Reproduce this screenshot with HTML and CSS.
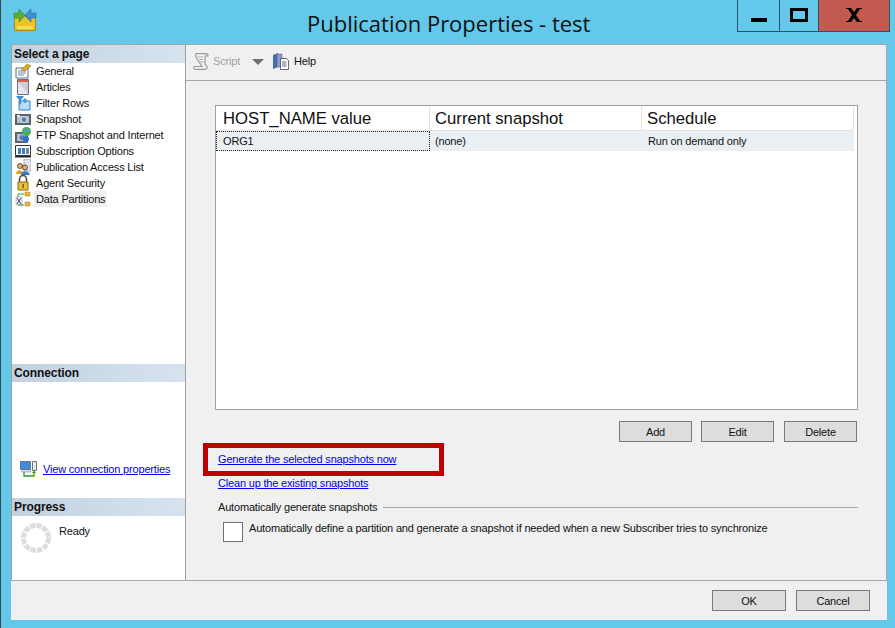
FILE: index.html
```html
<!DOCTYPE html>
<html lang="en">
<head>
<meta charset="utf-8">
<title>Publication Properties - test</title>
<link rel="stylesheet" href="styles.css">
</head>
<body>
<div class="frame">
  <header class="titlebar">
    <svg class="app-icon" width="24" height="24" viewBox="0 0 24 24">
      <path d="M1.500 7.500h21v15h-21z" fill="#e8c42a" stroke="#a98a14"/>
      <path d="M4 18h16v3H4z" fill="#f5dc55"/>
      <path d="M1 5h5V1l6 6.500-6 6.500V10H1z" fill="#5cae3c" stroke="#3c7f2c" stroke-width=".6"/>
      <path d="M23 5h-5V1l-6.500 6.500L18 14V10h5z" fill="#3f8fd0" stroke="#2d6a9f" stroke-width=".6"/>
    </svg>
    <h1 class="title">Publication Properties - test</h1>
    <div class="winctl">
      <div class="winbtn min"><span class="min-bar"></span></div>
      <div class="winbtn max"><span class="max-box"></span></div>
      <div class="winbtn close">
        <svg width="16" height="14" viewBox="0 0 16 14"><path d="M0 0h5l3 4 3-4h5v1h-2L10 7l4 6h2v1h-5L8 10l-3 4H0v-1h2l4-6-4-6H0z" fill="#000"/></svg>
      </div>
    </div>
  </header>

  <div class="client">
    <div class="panes">
      <aside class="sidebar">
        <section class="sec-pages">
          <h2 class="sec-head">Select a page</h2>
          <ul class="pages">
            <li class="page">
              <svg class="ico" width="16" height="16" viewBox="0 0 16 16"><path d="M1 5h12v10H1z" fill="#fff" stroke="#5a6a8a"/><path d="M3 8h8M3 10h8M3 12h6" stroke="#6a86b0"/><path d="M6 7l6-6 4 2-6 5z" fill="#e0a92c" stroke="#8d6a14" stroke-width=".5"/></svg>
              <span>General</span></li>
            <li class="page">
              <svg class="ico" width="16" height="16" viewBox="0 0 16 16"><path d="M2.500 0.500h11v15h-11z" fill="#d0ccd6" stroke="#6f6f86"/><path d="M3 1h10v2H3z" fill="#d9604a"/><path d="M3 3l10 12H3z" fill="#e8e6ec"/></svg>
              <span>Articles</span></li>
            <li class="page">
              <svg class="ico" width="16" height="16" viewBox="0 0 16 16"><path d="M4 6h11v9H4z" fill="#bcdcf5" stroke="#2f7fc0"/><path d="M1 1h8L6 5v5L4 8V5z" fill="#3b8fd3"/><path d="M10 3l3 3h-2v2h-2V6H7z" fill="#4da0dc"/></svg>
              <span>Filter Rows</span></li>
            <li class="page">
              <svg class="ico" width="16" height="16" viewBox="0 0 16 16"><path d="M0 3h16v11H0z" fill="#5a6470"/><path d="M2 5h12v7H2z" fill="#b4c0cd"/><circle cx="9" cy="8.500" r="3" fill="#5b7ea6" stroke="#e6ecf2"/><path d="M2 4h3v2H2z" fill="#e6e6e6"/></svg>
              <span>Snapshot</span></li>
            <li class="page">
              <svg class="ico" width="16" height="16" viewBox="0 0 16 16"><path d="M0 5h13v11H0z" fill="#5a6470"/><path d="M2 7h9v7H2z" fill="#b4c0cd"/><circle cx="7" cy="10.500" r="2.500" fill="#5b7ea6"/><circle cx="11.500" cy="4.500" r="4.500" fill="#4cae4c"/><path d="M9 2h5v3H9z" fill="#4f9fe0"/><circle cx="11" cy="12" r="3" fill="#2f6fd0"/></svg>
              <span>FTP Snapshot and Internet</span></li>
            <li class="page">
              <svg class="ico" width="16" height="16" viewBox="0 0 16 16"><path d="M.5 2.500h15v10H.5z" fill="#fff" stroke="#334"/><path d="M3 5h3v6H3zM7 5h3v6H7z" fill="#3d7cc8"/><path d="M11 5h3v6h-3z" fill="#788"/><path d="M0 13h16v1.500H0z" fill="#223"/></svg>
              <span>Subscription Options</span></li>
            <li class="page">
              <svg class="ico" width="16" height="16" viewBox="0 0 16 16"><path d="M9 0h7v12H9z" fill="#dfe6f0" stroke="#7788a0" stroke-width=".6"/><circle cx="5" cy="7" r="2.500" fill="#e3ad7c" stroke="#5a2e10" stroke-width=".8"/><path d="M1 15c0-5 7-5 8 0z" fill="#e5a51f"/><circle cx="10" cy="8.500" r="2.500" fill="#e3ad7c" stroke="#4a2a10" stroke-width=".8"/><path d="M6 16c0-5 8-5 9 0z" fill="#3b78c4"/></svg>
              <span>Publication Access List</span></li>
            <li class="page">
              <svg class="ico" width="16" height="16" viewBox="0 0 16 16"><path d="M4.500 7V4a3.500 3.500 0 017 0v3" fill="none" stroke="#4a4a4a" stroke-width="1.500"/><path d="M3 7h10v8H3z" fill="#e9bf3a" stroke="#8c6e12"/><path d="M7.500 9h1.500v4H7.500z" fill="#7a5c10"/></svg>
              <span>Agent Security</span></li>
            <li class="page selected">
              <svg class="ico" width="16" height="16" viewBox="0 0 16 16"><path d="M1 6h6v8H1z" fill="#eef" stroke="#889" stroke-width=".5"/><path d="M2 7l4 6M6 7l-4 6" stroke="#445"/><path d="M3 6V3h6M3 14h6" fill="none" stroke="#3c9c3c"/><path d="M10 1h5v4h-5zM10 11h5v4h-5z" fill="#e6b83a" stroke="#a38318" stroke-width=".5"/></svg>
              <span class="page-sel">Data Partitions</span></li>
          </ul>
        </section>

        <section class="sec-conn">
          <h2 class="sec-head">Connection</h2>
          <div class="conn-body">
            <svg class="ico-conn" width="18" height="16" viewBox="0 0 18 16"><path d="M.5 .5h10v8h-10z" fill="#3d8de0" stroke="#66748a"/><path d="M1 9.500h10v2H1z" fill="#b6bcc6"/><path d="M12.500 .5h4v9h-4z" fill="#e4e8ee" stroke="#6a7482"/><path d="M4 11v4h10v-3" fill="none" stroke="#2d9a2d" stroke-width="1.300"/><path d="M12 12l2-2.500 2 2.500z" fill="#2d9a2d"/></svg>
            <a class="link" href="#">View connection properties</a>
          </div>
        </section>

        <section class="sec-prog">
          <h2 class="sec-head">Progress</h2>
          <div class="prog-body">
            <svg class="spinner" width="30" height="30" viewBox="0 0 30 30"><circle cx="15" cy="15" r="12.500" fill="none" stroke="#dcdcdc" stroke-width="5" stroke-dasharray="5.345 1.200"/></svg>
            <span class="ready">Ready</span>
          </div>
        </section>
      </aside>

      <main class="main">
        <div class="toolbar">
          <svg class="tb-script" width="16" height="17" viewBox="0 0 16 17"><path d="M3 .7h9.500c1.500 0 2.500 1 2.500 2.300h-3v8l2 2.500c.3 1.500-.5 2.800-2 2.800H2.500C1 16.300.5 15 1 13.500h8L4 6 3 3.500C2.700 2 2 1 3 .7z" fill="#f2f2f2" stroke="#9a9a9a" stroke-width="1.200"/><path d="M5 4h5M6 6.500h4M7 9h3.500" stroke="#a8a8a8"/></svg>
          <span class="tb-label disabled">Script</span>
          <span class="tb-arrow"></span>
          <svg class="tb-help" width="16" height="17" viewBox="0 0 16 17"><path d="M0 2l5-2v14l-5 2z" fill="#4a6db0"/><path d="M4 1h5v13H4z" fill="#8aa0cc" stroke="#44598a" stroke-width=".5"/><path d="M7.500 5.500h6l2 2v9h-8z" fill="#fff" stroke="#445" stroke-width=".8"/><path d="M9 9h4.500M9 11h4.500M9 13h4.500" stroke="#667"/></svg>
          <span class="tb-label">Help</span>
        </div>

        <div class="content">
          <div class="grid">
            <div class="grid-row grid-head">
              <div class="c c1">HOST_NAME value</div>
              <div class="c c2">Current snapshot</div>
              <div class="c c3">Schedule</div>
            </div>
            <div class="grid-row grid-data">
              <div class="c c1 focus">ORG1</div>
              <div class="c c2">(none)</div>
              <div class="c c3">Run on demand only</div>
            </div>
          </div>

          <div class="grid-btns">
            <button class="btn" type="button">Add</button>
            <button class="btn" type="button">Edit</button>
            <button class="btn" type="button">Delete</button>
          </div>

          <div class="links">
            <div class="highlight"></div>
            <a class="link" href="#">Generate the selected snapshots now</a>
            <a class="link" href="#">Clean up the existing snapshots</a>
          </div>

          <div class="group-head">
            <span>Automatically generate snapshots</span>
            <span class="group-line"></span>
          </div>
          <label class="check-row">
            <span class="check"></span>
            <span>Automatically define a partition and generate a snapshot if needed when a new Subscriber tries to synchronize</span>
          </label>
        </div>
      </main>
    </div>
    <footer class="footer">
      <button class="btn btn-wide" type="button">OK</button>
      <button class="btn btn-wide" type="button">Cancel</button>
    </footer>
  </div>
</div>
</body>
</html>
```

FILE: styles.css
```css
* { box-sizing: border-box; }
html, body { margin: 0; height: 100%; overflow: hidden; }
body {
  background: #63c8ea;
  font-family: "Liberation Sans", Arial, sans-serif;
  font-size: 11px;
  letter-spacing: -0.18px;
  color: #111;
}
.frame {
  width: 895px;
  height: 628px;
  border-left: 1px solid #38454f;
  display: flex;
  flex-direction: column;
}
.titlebar {
  height: 44px;
  flex: none;
  display: flex;
  align-items: flex-start;
  padding-left: 12px;
}
.app-icon { margin-top: 8px; flex: none; }
.title {
  margin: 9px 0 0 270px;
  font-family: "Open Sans", sans-serif;
  font-weight: 400;
  font-size: 22px;
  letter-spacing: 0;
  line-height: 28px;
  color: #111;
  white-space: nowrap;
}
.winctl {
  margin-left: auto;
  margin-right: 5px;
  display: flex;
  height: 32px;
  border: 1px solid #2c5266;
  border-top: 0;
}
.winbtn {
  display: flex;
  align-items: center;
  justify-content: center;
  border-right: 1px solid #2c5266;
}
.min { width: 42px; }
.max { width: 39px; }
.close { width: 70px; background: #c35a50; border-right: 0; }
.min-bar { width: 16px; height: 4px; background: #000; margin-top: 9px; }
.max-box { width: 18px; height: 14px; border: 3px solid #000; margin-top: -1px; }
.close svg { margin-top: -2px; }

.client {
  width: 876px;
  height: 576px;
  margin-left: 10px;
  background: #f0f0f0;
  border-top: 1px solid #a8a8a8;
  display: flex;
  flex-direction: column;
}
.panes { flex: 1; display: flex; min-height: 0; }

.sidebar {
  width: 175px;
  flex: none;
  background: #fff;
  border-left: 1px solid #a0a0a0;
  border-right: 1px solid #a0a0a0;
  display: flex;
  flex-direction: column;
}
.sec-head {
  margin: 0;
  height: 18px;
  padding-left: 2px;
  font-size: 12px;
  letter-spacing: -0.1px;
  line-height: 18px;
  font-weight: 700;
  color: #111;
  background: linear-gradient(90deg, #c3d1df, #d6e3ef);
}
.sec-pages { height: 319px; flex: none; }
.pages { list-style: none; margin: 0; padding: 0; }
.page {
  height: 16px;
  display: flex;
  align-items: center;
  padding-left: 3px;
  line-height: 16px;
  white-space: nowrap;
}
.page .ico { flex: none; margin-right: 5px; }
.page-sel { background: #f0f0f0; padding: 0 2px; margin-left: -2px; }

.sec-conn { height: 134px; flex: none; display: flex; flex-direction: column; }
.conn-body {
  flex: 1;
  display: flex;
  align-items: flex-end;
  padding: 0 0 22px 8px;
  white-space: nowrap;
}
.ico-conn { flex: none; margin-right: 5px; margin-bottom: -1px; }
.link { color: #0000ee; text-decoration: underline; line-height: 14px; white-space: nowrap; }

.sec-prog { flex: 1; display: flex; flex-direction: column; }
.prog-body { display: flex; align-items: flex-start; padding: 7px 0 0 9px; }
.spinner { flex: none; }
.ready { margin: 1px 0 0 8px; line-height: 14px; }

.main {
  flex: 1;
  display: flex;
  flex-direction: column;
  min-width: 0;
  border-right: 1px solid #a8a8a8;
}
.toolbar {
  height: 36px;
  flex: none;
  border-bottom: 1px solid #a8a8a8;
  display: flex;
  align-items: center;
  padding: 0 0 3px 7px;
}
.tb-label { line-height: 16px; }
.disabled { color: #a0a0a0; margin-left: 4px; }
.tb-arrow {
  width: 0; height: 0;
  border-left: 6px solid transparent;
  border-right: 6px solid transparent;
  border-top: 6px solid #6e6e6e;
  margin: 1px 0 0 12px;
}
.tb-help { margin: 0 5px 0 9px; }

.content {
  flex: 1;
  display: flex;
  flex-direction: column;
  padding: 24px 28px 0 29px;
}
.grid {
  height: 305px;
  flex: none;
  background: #fff;
  border: 1px solid #a0a0a0;
}
.grid-row { display: flex; }
.grid-head { height: 25px; font-size: 16.700px; letter-spacing: 0; line-height: 26px; }
.grid-head .c { border-right: 1px solid #e3e3e3; border-bottom: 1px solid #e3e3e3; padding-left: 7px; }
.grid-head .c2, .grid-head .c3 { padding-left: 5px; }
.grid-data { height: 20px; line-height: 20px; }
.grid-data .c { background: #e9eff3; }
.c { white-space: nowrap; }
.c1 { width: 214px; padding-left: 7px; }
.c2 { width: 212px; padding-left: 5px; }
.c3 { width: 212px; padding-left: 6px; }
.focus { outline: 1px dotted #222; outline-offset: -1px; }

.grid-btns {
  display: flex;
  justify-content: flex-end;
  gap: 9px;
  margin-top: 11px;
  padding-right: 1px;
}
.grid-btns .btn:last-child { margin-left: 1px; }
.btn {
  width: 73px;
  height: 21px;
  padding: 0;
  background: #dddddd;
  border: 1px solid #7a7a7a;
  border-radius: 0;
  font: inherit;
  letter-spacing: inherit;
  color: #111;
}
.btn-wide { width: 74px; }

.links {
  display: flex;
  flex-direction: column;
  gap: 10px;
  margin: 0 0 0 3px;
  padding-top: 10px;
  position: relative;
  align-items: flex-start;
}
.highlight {
  position: absolute;
  left: -15px;
  top: 1px;
  width: 241px;
  height: 33px;
  border: 5px solid #c00000;
  pointer-events: none;
}

.group-head {
  display: flex;
  align-items: center;
  margin: 10px 0 0 3px;
  line-height: 14px;
}
.group-line { flex: 1; height: 1px; background: #a8a8a8; margin-left: 6px; }
.check-row { display: flex; align-items: flex-start; margin: 8px 0 0 8px; line-height: 12px; }
.check {
  width: 20px; height: 20px;
  flex: none;
  background: #fff;
  border: 1px solid #707070;
  margin-right: 6px;
}
.footer {
  height: 40px;
  flex: none;
  display: flex;
  justify-content: flex-end;
  gap: 10px;
  padding: 9px 17px 0 0;
  border-top: 1px solid #a8a8a8;
}
```
